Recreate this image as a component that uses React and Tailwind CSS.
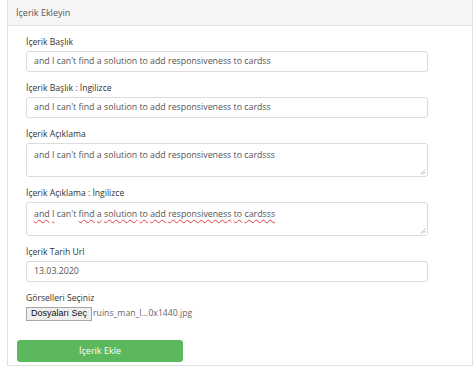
import React from 'react'

const text = "and I can't find a solution to add responsiveness to cardss"

function Field({ label, children }) {
  return (
    <div className="mb-[10px]">
      <div className="h-[12px] text-[8.6px] leading-[12px] text-[#333] mb-[3px] whitespace-nowrap">{label}</div>
      {children}
    </div>
  )
}

function Grip() {
  return (
    <svg className="absolute right-[1px] bottom-[1px]" width="6" height="6" viewBox="0 0 6 6">
      <path d="M5.5 0.5 L0.5 5.5 M5.5 3 L3 5.5" stroke="#9a9a9a" strokeWidth="0.7" />
    </svg>
  )
}

function App() {
  const words = ["and", " ", "I", " can't ", "find", " ", "a", " ", "solution", " ", "to", " ", "add", " ", "responsiveness", " ", "to", " ", "cardsss"]

  return (
    <div className="w-[474px] h-[382px] bg-white overflow-hidden" style={{ fontFamily: '"Open Sans", sans-serif' }}>
      <div className="ml-[7px] w-[466px] border border-t-0 border-[#e3e3e3] bg-white">
        <div className="h-[26px] bg-[#f5f5f5] border-b border-[#e6e6e6] pl-[8px] flex items-center text-[9px] text-[#555]">
          İçerik Ekleyin
        </div>
        <div className="pl-[18px] pt-[10px]">
          <Field label="İçerik Başlık">
            <div className="w-[402px] h-[21px] border border-[#dcdcdc] rounded-[3px] px-[7px] flex items-center text-[8.8px] text-[#555]">{text}</div>
          </Field>
          <Field label="İçerik Başlık : İngilizce">
            <div className="w-[402px] h-[21px] border border-[#dcdcdc] rounded-[3px] px-[7px] flex items-center text-[8.8px] text-[#555]">{text}</div>
          </Field>
          <Field label="İçerik Açıklama">
            <div className="relative w-[402px] h-[34px] border border-[#dcdcdc] rounded-[3px] px-[7px] pt-[5px] text-[8.8px] leading-[12px] text-[#555]">
              and I can't find a solution to add responsiveness to cardsss
              <Grip />
            </div>
          </Field>
          <Field label="İçerik Açıklama : İngilizce">
            <div className="relative w-[402px] h-[34px] border border-[#dcdcdc] rounded-[3px] px-[7px] pt-[5px] text-[8.8px] leading-[12px] text-[#555]">
              {words.map((w, i) =>
                w.trim() && w !== " can't " ? (
                  <span key={i} className="underline decoration-wavy decoration-[#e04040] decoration-[1px] underline-offset-[2px]">{w}</span>
                ) : (
                  <span key={i} className="whitespace-pre">{w}</span>
                )
              )}
              <Grip />
            </div>
          </Field>
          <Field label="İçerik Tarih Url">
            <div className="w-[402px] h-[21px] border border-[#dcdcdc] rounded-[3px] px-[7px] flex items-center text-[8.8px] text-[#555]">13.03.2020</div>
          </Field>
          <div className="h-[12px] text-[8.6px] leading-[12px] text-[#333] mb-[3px]">Görselleri Seçiniz</div>
          <div className="flex items-center h-[14px]">
            <span className="h-[14px] w-[66px] border border-[#a6a6a6] bg-[#efefef] text-[9px] text-[#111] flex items-center justify-center" style={{ fontFamily: '"Liberation Sans", sans-serif' }}>
              Dosyaları Seç
            </span>
            <span className="ml-[1px] text-[8.7px] text-[#666]">ruins_man_l...0x1440.jpg</span>
          </div>
        </div>
        <div className="pl-[9px] pt-[19px] pb-[3px]">
          <button className="w-[166px] h-[22px] bg-[#5cb85c] rounded-[3px] text-white text-[9px] flex items-center justify-center">
            İçerik Ekle
          </button>
        </div>
      </div>
    </div>
  )
}

export default App
